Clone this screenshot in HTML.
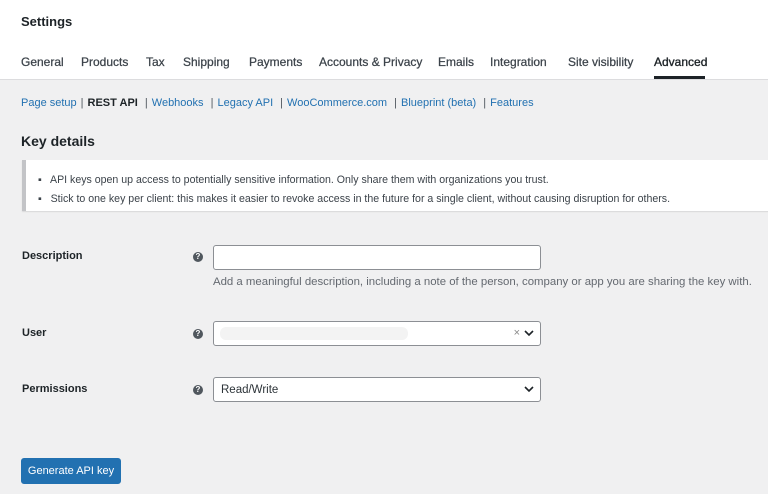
<!DOCTYPE html>
<html><head><style>
body{margin:0;width:768px;height:494px;background:#f0f0f1;font-family:"Liberation Sans",sans-serif;color:#1d2327;overflow:hidden;position:relative}
.hdr{position:absolute;left:0;top:0;width:768px;height:79px;background:#fff;border-bottom:1px solid #dcdcde}
.t{position:absolute;white-space:nowrap}
.tab{position:absolute;top:55px;font-size:12px;color:#3c434a;-webkit-text-stroke:0.25px #3c434a}
.sub{position:absolute;top:97px;font-size:11px;color:#2271b1;white-space:nowrap}
.sub b{color:#1d2327}
.sub span{color:#50575e;margin:0 4px}
.notice{position:absolute;left:22px;top:160px;width:760px;height:51px;background:#fff;border-left:4px solid #c3c4c7;box-shadow:0 1px 1px rgba(0,0,0,.1);font-size:10.6px;color:#3c434a}
.lbl{position:absolute;left:22px;font-size:11px;font-weight:bold}
.q{position:absolute;left:193px;width:10px;height:10px;border-radius:50%;background:#50575e;color:#fff;font-size:8px;font-weight:bold;text-align:center;line-height:10px}
.inp{position:absolute;left:213px;width:326px;height:23px;background:#fff;border:1px solid #8c8f94;border-radius:3px}
.chev{position:absolute;right:6px;top:6px}
</style></head><body>
<div class="hdr"></div>
<div class="t" style="left:21px;top:14px;font-size:13px;font-weight:bold">Settings</div>
<div class="tab" style="left:21px">General</div>
<div class="tab" style="left:81px">Products</div>
<div class="tab" style="left:146px">Tax</div>
<div class="tab" style="left:183px">Shipping</div>
<div class="tab" style="left:249px">Payments</div>
<div class="tab" style="left:319px">Accounts &amp; Privacy</div>
<div class="tab" style="left:438px">Emails</div>
<div class="tab" style="left:490px">Integration</div>
<div class="tab" style="left:568px">Site visibility</div>
<div class="tab" style="left:654px;color:#1d2327;-webkit-text-stroke:0.35px #1d2327">Advanced</div>
<div style="position:absolute;left:654px;top:76px;width:51px;height:3px;background:#1d2327"></div>
<div class="sub" style="left:21px">Page setup<span>|</span><b>REST API</b><span> |</span>Webhooks<span> |</span>Legacy API<span> |</span>WooCommerce.com<span> |</span>Blueprint (beta)<span> |</span>Features</div>
<div class="t" style="left:21px;top:133px;font-size:14px;font-weight:bold">Key details</div>
<div class="notice">
<div class="t" style="left:12px;top:14px">▪&nbsp;&nbsp; API keys open up access to potentially sensitive information. Only share them with organizations you trust.</div>
<div class="t" style="left:12px;top:33px">▪&nbsp;&nbsp; Stick to one key per client: this makes it easier to revoke access in the future for a single client, without causing disruption for others.</div>
</div>
<div class="lbl" style="top:250px">Description</div>
<div class="q" style="top:252px">?</div>
<div class="inp" style="top:245px"></div>
<div class="t" style="left:213px;top:276px;font-size:11.4px;color:#646970">Add a meaningful description, including a note of the person, company or app you are sharing the key with.</div>
<div class="lbl" style="top:327px">User</div>
<div class="q" style="top:329px">?</div>
<div class="inp" style="top:321px"><div style="position:absolute;left:6px;top:5px;width:188px;height:13px;background:#f3f3f3;border-radius:6px"></div><div class="t" style="right:20px;top:5px;font-size:11px;color:#888">×</div><svg class="chev" width="10" height="10" viewBox="0 0 10 10"><path d="M1 3l4 4 4-4" stroke="#1d2327" stroke-width="1.6" fill="none"/></svg></div>
<div class="lbl" style="top:383px">Permissions</div>
<div class="q" style="top:385px">?</div>
<div class="inp" style="top:377px"><div class="t" style="left:7px;top:6px;font-size:11.5px;color:#2c3338">Read/Write</div><svg class="chev" width="10" height="10" viewBox="0 0 10 10"><path d="M1 3l4 4 4-4" stroke="#1d2327" stroke-width="1.6" fill="none"/></svg></div>
<div style="position:absolute;left:21px;top:458px;width:98px;height:24px;background:#2271b1;border:1px solid #2271b1;border-radius:3px;color:#fff;font-size:11px;text-align:center;line-height:24px">Generate API key</div>
</body></html>
